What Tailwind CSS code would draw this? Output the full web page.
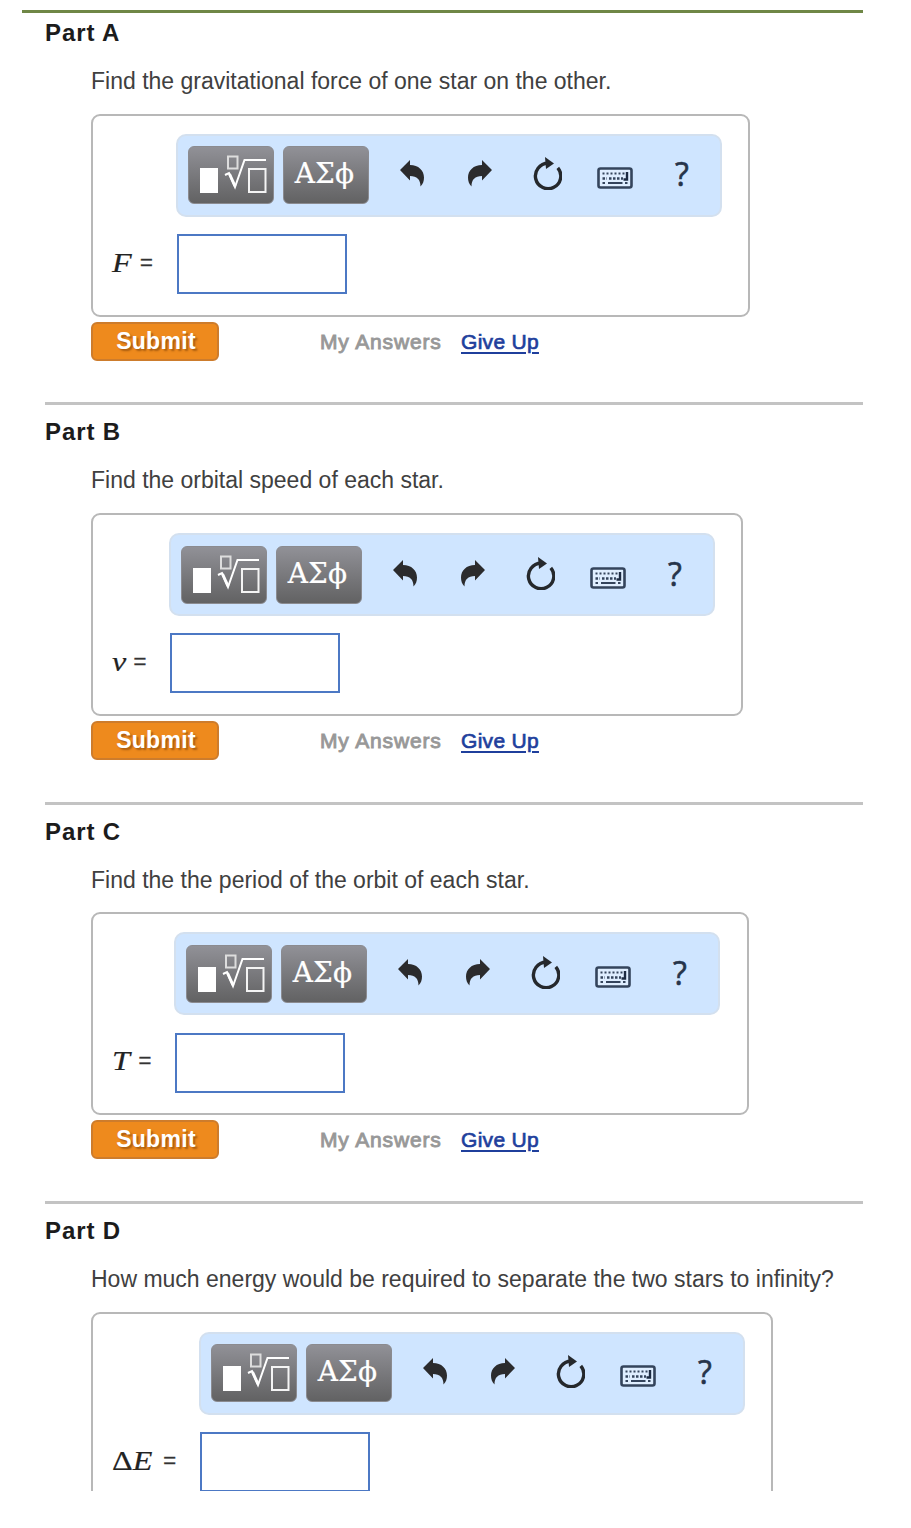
<!DOCTYPE html>
<html lang="en">
<head>
<meta charset="utf-8">
<title>Binary stars</title>
<script src="https://cdn.jsdelivr.net/npm/@tailwindcss/browser@4"></script>
</head>
<body class="bg-white">
<svg class="hidden">
  <symbol id="root" viewBox="0 0 84 56">
    <rect x="11" y="21" width="18" height="25" fill="#fff"/>
    <rect x="39" y="9.500" width="9.500" height="12" fill="none" stroke="#ddd" stroke-width="2"/>
    <path d="M36 28l4-2 6 14L55.500 13H77" fill="none" stroke="#fff" stroke-width="2"/>
    <path d="M40.500 27l5.500 12" stroke="#fff" stroke-width="3"/>
    <rect x="60" y="22" width="16.500" height="23" fill="none" stroke="#f4f4f4" stroke-width="2"/>
  </symbol>
  <symbol id="undo" viewBox="0 0 24 27">
    <path d="M0 10L10 0V5C18.500 5 24 10.500 24 17.500C24 21 23 24 20.500 26.500C20.500 19.500 17 16 10 16V20.500Z" fill="#2b2b2d"/>
  </symbol>
  <symbol id="reload" viewBox="0 0 30 33">
    <path d="M16 6.300A12.700 12.700 0 1 0 25.800 10.800" fill="none" stroke="#25282c" stroke-width="3.400"/>
    <path d="M13 0L22 6.500L14 12Z" fill="#25282c"/>
  </symbol>
  <symbol id="keys" viewBox="0 0 36 22">
    <rect x="1.500" y="1.500" width="33" height="19" rx="2" fill="#dfeeff" stroke="#34445c" stroke-width="2.600"/>
    <path d="M5.500 6.500H28" stroke="#34445c" stroke-width="2" stroke-dasharray="2 2"/>
    <path d="M5.500 11.500H10M12 11.500H26" stroke="#34445c" stroke-width="2.400" stroke-dasharray="2.500 1.500"/>
    <path d="M30 5V12.500H26.500" fill="none" stroke="#1d2b42" stroke-width="2.400"/>
    <path d="M5.500 16H8M11 16H25.500M28 16H30.500" stroke="#34445c" stroke-width="2.200"/>
  </symbol>
</svg>
<main id="page" class="h-[1491px] overflow-hidden pt-[10px]"></main>
<script>
const sym = "inline-block origin-left scale-x-[1.15] font-['Liberation_Serif',serif] text-[28px] leading-none text-[#222] [-webkit-text-stroke:0.2px_#222]";
const parts = [
  { name: 'A', q: 'Find the gravitational force of one star on the other.', v: '<i>F</i>', eq: 'pl-[5px]', sec: 'h-[392px]', line: 'ml-[22px] bg-[#6f8746]', head: 'h-[39px]', ask: 'h-[62px] pt-[15px]', panel: 'w-[659px]', label: 'w-[85px]', bar: 'pt-[10px]', input: 'mt-[17px]' },
  { name: 'B', q: 'Find the orbital speed of each star.', v: '<i>v</i>', eq: 'pl-[3px]', sec: 'h-[400px]', line: 'ml-[45px] bg-[#c3c3c3]', head: 'h-[54px]', ask: 'h-[54px] pt-[7px]', panel: 'w-[652px]', label: 'w-[78px]', bar: 'pt-[11px]', input: 'mt-[17px]' },
  { name: 'C', q: 'Find the the period of the orbit of each star.', v: '<i>T</i>', eq: 'pl-[5px]', sec: 'h-[399px]', line: 'ml-[45px] bg-[#c3c3c3]', head: 'h-[54px]', ask: 'h-[53px] pt-[7px]', panel: 'w-[658px]', label: 'w-[83px]', bar: 'pt-[11px]', input: 'mt-[18px]' },
  { name: 'D', q: 'How much energy would be required to separate the two stars to infinity?', v: 'Δ<i>E</i>', eq: 'pl-[10px]', sec: 'h-[399px]', line: 'ml-[45px] bg-[#c3c3c3]', head: 'h-[54px]', ask: 'h-[54px] pt-[7px]', panel: 'w-[682px]', label: 'w-[108px]', bar: 'pt-[10px]', input: 'mt-[17px]' }
];
const gray = 'h-[58px] w-[86px] shrink-0 rounded-[6px] border border-[#8b8b90] bg-linear-to-b from-[#919197] to-[#626263]';
const footer = `
  <div class="mt-[5px] ml-[91px] flex h-[39px] items-center whitespace-nowrap text-[21px]">
    <div class="flex h-[39px] w-[128px] items-center justify-center rounded-[6px] border-2 border-[#cd7c2c] bg-[#ee8a1d] pb-px pl-[2px] text-[23px] font-bold tracking-[0.3px] text-white [text-shadow:2px_2px_2px_#a85c10]">Submit</div>
    <span class="ml-[101px] w-[141px] tracking-[0.85px] text-[#989898] [-webkit-text-stroke:0.9px_#989898]">My Answers</span>
    <span class="tracking-[0.3px] text-[#1f3f9c] underline decoration-2 underline-offset-[3px] [-webkit-text-stroke:0.7px_#1f3f9c]">Give Up</span>
  </div>`;
document.getElementById('page').innerHTML = parts.map(p => `
<section class="${p.sec} font-['Liberation_Sans',sans-serif]">
  <div class="h-[3px] mr-[48px] ${p.line}"></div>
  <h2 class="${p.head} flex items-center pl-[45px] text-[24px] font-bold tracking-[0.9px] whitespace-nowrap text-[#1c1c1c]">Part ${p.name}</h2>
  <p class="${p.ask} pl-[91px] text-[23px] leading-[28px] whitespace-nowrap text-[#404040]">${p.q}</p>
  <div class="${p.panel} h-[203px] ml-[91px] flex rounded-[9px] border-2 border-[#b8b8b8] pt-[18px]">
    <div class="${p.label} shrink-0 flex items-center gap-[6px] pt-[75px] -ml-[2px] pl-[21px] h-[182px] whitespace-nowrap">
      <span class="${sym}">${p.v}</span>
      <span class="${p.eq} text-[22px] leading-none text-[#333] [-webkit-text-stroke:0.4px_#333]">=</span>
    </div>
    <div class="shrink-0">
      <div class="${p.bar} h-[83px] flex w-[546px] rounded-[10px] border-2 border-[#d3e0ef] bg-[#cfe5ff] pl-[10px]">
        <div class="${gray}"><svg class="h-[56px] w-[84px]"><use href="#root"/></svg></div>
        <div class="${gray} ml-[9px] flex items-center justify-center pb-[2px] font-['DejaVu_Serif',serif] text-[28px] text-white"><span class="-ml-[3px] tracking-[0.1px] [-webkit-text-stroke:0.2px_white]">ΑΣϕ</span></div>
        <svg class="mt-[14px] ml-[31px] h-[27px] w-[24px]"><use href="#undo"/></svg>
        <svg class="mt-[14px] ml-[44px] h-[27px] w-[24px] -scale-x-100"><use href="#undo"/></svg>
        <svg class="mt-[11px] ml-[40px] h-[33px] w-[30px]"><use href="#reload"/></svg>
        <svg class="mt-[21px] ml-[35px] h-[22px] w-[36px]"><use href="#keys"/></svg>
        <span class="ml-[42px] mt-[11px] font-['Open_Sans',sans-serif] text-[32px] leading-[33px] text-[#26344a] [-webkit-text-stroke:0.6px_#26344a]">?</span>
      </div>
      <div class="${p.input} ml-px h-[60px] w-[170px] border-2 border-[#4c78c4] bg-white"></div>
    </div>
  </div>${p.name === 'D' ? '' : footer}
</section>`).join('');
</script>
</body>
</html>
